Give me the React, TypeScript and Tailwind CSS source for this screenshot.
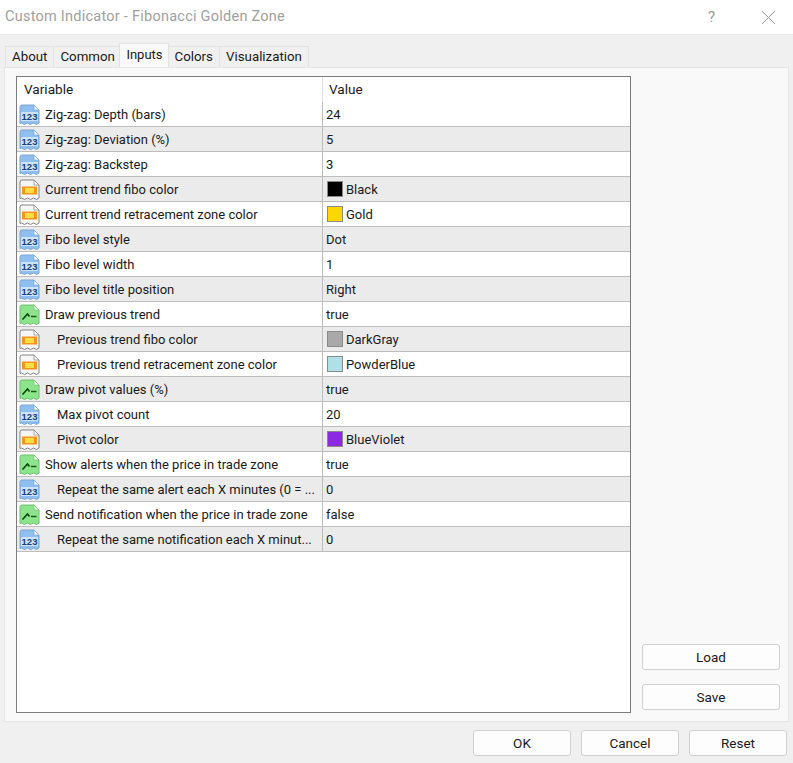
import { ReactNode } from 'react'

type Kind = 'num' | 'color' | 'bool'

const rows: { icon: Kind; label: string; value: string; swatch?: string; indent?: boolean }[] = [
  { icon: 'num', label: 'Zig-zag: Depth (bars)', value: '24' },
  { icon: 'num', label: 'Zig-zag: Deviation (%)', value: '5' },
  { icon: 'num', label: 'Zig-zag: Backstep', value: '3' },
  { icon: 'color', label: 'Current trend fibo color', value: 'Black', swatch: '#000000' },
  { icon: 'color', label: 'Current trend retracement zone color', value: 'Gold', swatch: '#ffd700' },
  { icon: 'num', label: 'Fibo level style', value: 'Dot' },
  { icon: 'num', label: 'Fibo level width', value: '1' },
  { icon: 'num', label: 'Fibo level title position', value: 'Right' },
  { icon: 'bool', label: 'Draw previous trend', value: 'true' },
  { icon: 'color', label: 'Previous trend fibo color', value: 'DarkGray', swatch: '#a9a9a9', indent: true },
  { icon: 'color', label: 'Previous trend retracement zone color', value: 'PowderBlue', swatch: '#b0e0e6', indent: true },
  { icon: 'bool', label: 'Draw pivot values (%)', value: 'true' },
  { icon: 'num', label: 'Max pivot count', value: '20', indent: true },
  { icon: 'color', label: 'Pivot color', value: 'BlueViolet', swatch: '#8a2be2', indent: true },
  { icon: 'bool', label: 'Show alerts when the price in trade zone', value: 'true' },
  { icon: 'num', label: 'Repeat the same alert each X minutes (0 = ...', value: '0', indent: true },
  { icon: 'bool', label: 'Send notification when the price in trade zone', value: 'false' },
  { icon: 'num', label: 'Repeat the same notification each X minut...', value: '0', indent: true },
]

const tabs = ['About', 'Common', 'Inputs', 'Colors', 'Visualization']

const sheet = 'M1 3a2 2 0 0 1 2-2h12l5 5v13l-2.5 1.5-3-1.5-3 1.5-3-1.5-3 1.5-3-1.5-1.5.5z'

function RowIcon({ kind }: { kind: Kind }) {
  const fill = kind === 'num' ? '#8fbfee' : kind === 'bool' ? '#8ce48c' : '#f6f6f6'
  const stroke = kind === 'num' ? '#7aa6d4' : kind === 'bool' ? '#6cc06c' : '#858585'
  return (
    <svg width="21" height="21" viewBox="0 0 21 21" className="shrink-0">
      <path d={sheet} fill={fill} stroke={stroke} />
      <path d="M15 1v5h5z" fill="#ffffff" stroke={stroke} strokeWidth="0.7" />
      {kind === 'num' && (
        <>
          <rect x="2" y="8" width="17" height="9" fill="#cfe3f8" />
          <text x="10.5" y="15.8" textAnchor="middle" fontSize="9.5" fontWeight="700" fill="#12427e" fontFamily="Liberation Sans, sans-serif">123</text>
        </>
      )}
      {kind === 'bool' && (
        <>
          <path d="M3.5 15.5l5-5.5 2 2.5" fill="none" stroke="#0c4a0c" strokeWidth="1.7" />
          <path d="M12 12.5h5.5" stroke="#155c15" strokeWidth="1.5" />
        </>
      )}
      {kind === 'color' && (
        <>
          <rect x="3" y="7.5" width="15" height="8" fill="#f2951c" />
          <rect x="6" y="9" width="9" height="5" fill="#f9df45" />
        </>
      )}
    </svg>
  )
}

function Btn({ children, className }: { children: ReactNode; className: string }) {
  return (
    <button className={`h-[26px] rounded-[3px] border border-[#d0d0d0] bg-[#fdfdfd] text-[13.5px] text-[#1a1a1a] ${className}`}>
      {children}
    </button>
  )
}

export default function App() {
  return (
    <div className="flex h-[763px] w-[793px] flex-col overflow-hidden bg-[#f0f0f0] font-['Roboto','Liberation_Sans',sans-serif] text-[13px] text-[#1a1a1a]">
      {/* title bar */}
      <div className="flex h-[35px] shrink-0 items-center justify-between border-b border-[#ebebeb] bg-white pl-[5px] pr-[17px]">
        <span className="text-[14.5px] tracking-[0.25px] text-[#a0a0a0]">Custom Indicator - Fibonacci Golden Zone</span>
        <div className="flex items-center gap-[46px]">
          <span className="text-[15px] text-[#999999]">?</span>
          <svg width="15" height="15" viewBox="0 0 15 15">
            <path d="M1 1l13 13M14 1L1 14" stroke="#9a9a9a" strokeWidth="1" fill="none" />
          </svg>
        </div>
      </div>

      {/* tabs */}
      <div className="ml-[5px] mt-[9px] flex h-[23px] shrink-0 items-end text-[13.3px]">
        {tabs.map(t => (
          t === 'Inputs' ? (
            <div key={t} className="-ml-[3px] flex h-[24px] items-start border border-b-0 border-[#e2e2e2] bg-[#f9f9f9] pl-[6.5px] pr-[5px] pt-[1px] text-[13px]">{t}</div>
          ) : (
            <div key={t} className="flex h-[21px] items-center border border-l-0 border-b-0 border-[#e2e2e2] bg-[#f0f0f0] px-[6px] first:border-l">{t}</div>
          )
        ))}
      </div>

      {/* panel */}
      <div className="mx-[4px] flex h-[655px] shrink-0 gap-[11px] border border-[#e6e6e6] bg-[#f9f9f9] pb-[8px] pl-[11px] pr-[9px] pt-[8px]">
        <div className="w-[615px] shrink-0 border border-[#7c7c7c] bg-white">
          <div className="flex h-[25px] items-center text-[13.6px]">
            <div className="w-[305px] pl-[7px]">Variable</div>
            <div className="h-full w-px bg-[#e0e0e0]"></div>
            <div className="pl-[6px]">Value</div>
          </div>
          {rows.map((r, i) => (
            <div key={r.label} className={`flex h-[25px] border-b border-[#bdbdbd] ${i % 2 === 1 ? 'bg-[#ebebeb]' : 'bg-white'}`}>
              <div className="flex w-[305px] shrink-0 items-center pl-[2px]">
                <RowIcon kind={r.icon} />
                <span className={`whitespace-nowrap pt-[1px] ${r.indent ? 'pl-[17px]' : 'pl-[5px]'}`}>{r.label}</span>
              </div>
              <div className="w-px bg-[#bdbdbd]"></div>
              <div className="flex items-center pl-[3px]">
                {r.swatch && <span className="ml-[1px] mr-[3px] h-[16px] w-[16px] border border-[#8a8a8a]" style={{ backgroundColor: r.swatch }}></span>}
                <span className="pt-[1px]">{r.value}</span>
              </div>
            </div>
          ))}
        </div>
        <div className="flex flex-1 flex-col items-end justify-end gap-[14px] pb-[3px]">
          <Btn className="w-[138px]">Load</Btn>
          <Btn className="w-[138px]">Save</Btn>
        </div>
      </div>

      {/* footer */}
      <div className="mr-[6px] mt-[8px] flex justify-end gap-[10px]">
        <Btn className="w-[98px]">OK</Btn>
        <Btn className="w-[98px]">Cancel</Btn>
        <Btn className="w-[98px]">Reset</Btn>
      </div>
    </div>
  )
}
